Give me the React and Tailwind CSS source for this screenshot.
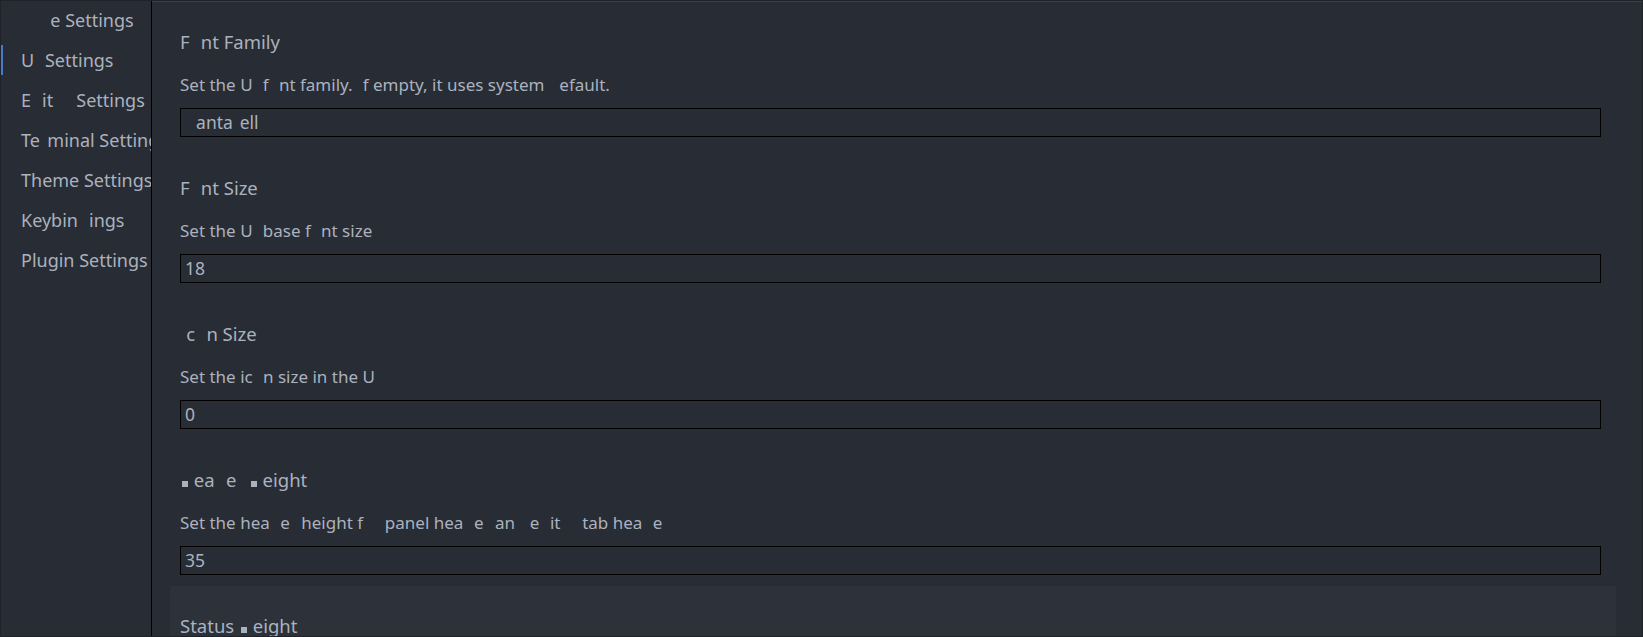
import React from 'react';

// glyphs the original font could not draw keep their width but show nothing
const M = ({ children }) => <span className="text-transparent">{children}</span>;

// the "H" that comes out as a small box
const Sq = () => (
  <span className="relative text-transparent">
    H
    <span className="absolute left-[2px] bottom-[5px] w-[6px] h-[6px] bg-[#abb2bf]" />
  </span>
);

const navItems = [
  { id: 'core', label: <><M>Cor</M>e Settings</> },
  { id: 'ui', label: <>U<M>I</M> Settings</>, active: true },
  { id: 'editor', label: <>E<M>d</M>it<M>or</M> Settings</> },
  { id: 'terminal', label: <>Te<M>r</M>minal Settings</> },
  { id: 'theme', label: <>Theme Settings</> },
  { id: 'keys', label: <>Keybin<M>d</M>ings</> },
  { id: 'plugin', label: <>Plugin Settings</> },
];

function Setting({ title, desc, value, hovered }) {
  return (
    <div className={`pl-[10px] pr-[15px] pt-[28px] pb-[11px] ${hovered ? 'bg-[#2c313a]' : ''}`}>
      <div className="h-[24px] leading-[24px] text-[18.5px] whitespace-pre">{title}</div>
      <div className="mt-[19px] h-[24px] leading-[24px] text-[17px] whitespace-pre">{desc}</div>
      {value !== undefined && (
        <div className="mt-[11px] h-[29px] border border-black px-[4px] leading-[27px] text-[17.5px] whitespace-pre">
          {value}
        </div>
      )}
    </div>
  );
}

export default function App() {
  return (
    <div className="flex h-[637px] w-full overflow-hidden bg-[#282c34] border border-[#1f2329] font-['Noto_Sans',sans-serif] text-[#abb2bf]">
      <aside className="w-[151px] shrink-0 border-r border-black pt-[4px] flex flex-col gap-[10px] overflow-hidden text-[18px]">
        {navItems.map(item => (
          <div
            key={item.id}
            className={`h-[30px] leading-[30px] whitespace-nowrap overflow-hidden border-l-2 pl-[18px] ${
              item.active ? 'border-[#4d78cc]' : 'border-transparent'
            }`}
          >
            {item.label}
          </div>
        ))}
      </aside>

      <main className="flex-1 border-t border-[#3a3f4b] pl-[18px] pr-[26px] overflow-hidden">
        <Setting
          title={<>F<M>o</M>nt Family</>}
          desc={<>Set the U<M>I</M> f<M>o</M>nt family. <M>I</M>f empty, it uses system <M>d</M>efault.</>}
          value={<><M>C</M>anta<M>r</M>ell</>}
        />
        <Setting
          title={<>F<M>o</M>nt Size</>}
          desc={<>Set the U<M>I</M> base f<M>o</M>nt size</>}
          value="18"
        />
        <Setting
          title={<><M>I</M>c<M>o</M>n Size</>}
          desc={<>Set the ic<M>o</M>n size in the U<M>I</M></>}
          value="0"
        />
        <Setting
          title={<><Sq />ea<M>d</M>e<M>r</M> <Sq />eight</>}
          desc={<>Set the hea<M>d</M>e<M>r</M> height f<M>or</M> panel hea<M>d</M>e<M>r</M> an<M>d</M> e<M>d</M>it<M>or</M> tab hea<M>d</M>e<M>r</M></>}
          value="35"
        />
        <Setting
          title={<>Status <Sq />eight</>}
          desc={<>Set the status bar height</>}
          value="25"
          hovered
        />
      </main>
    </div>
  );
}
